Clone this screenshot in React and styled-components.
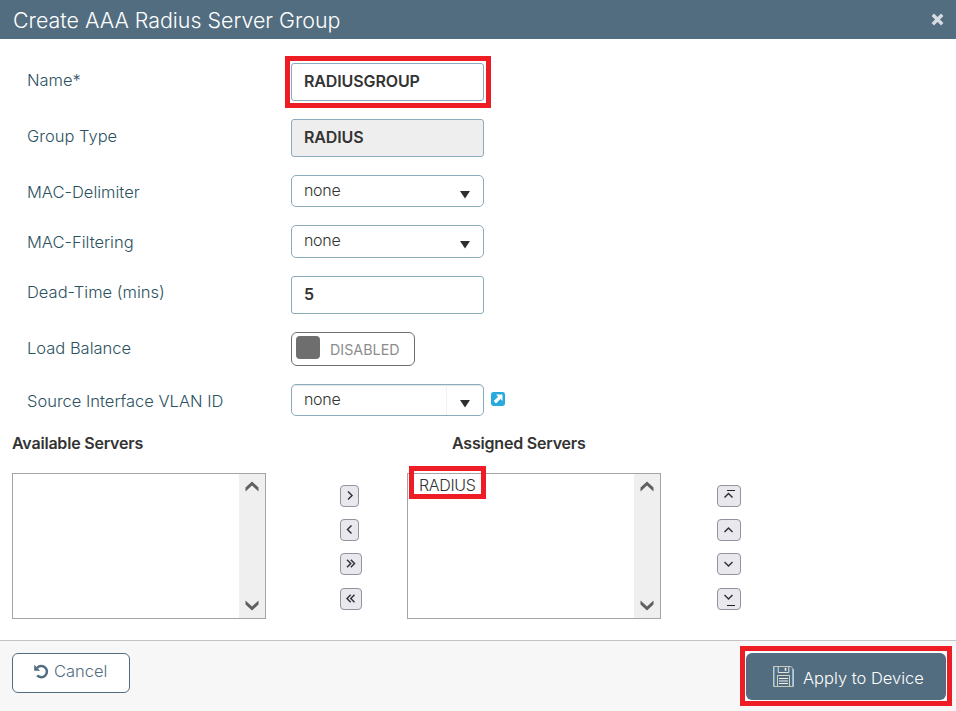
import { useState } from "react";
import styled, { createGlobalStyle, css } from "styled-components";

const GlobalStyle = createGlobalStyle`
  * {
    box-sizing: border-box;
  }
  body {
    margin: 0;
    background: #ffffff;
    font-family: Inter, "Liberation Sans", sans-serif;
    font-size: 16px;
    font-weight: 300;
    color: #333333;
  }
  button, input {
    font-family: inherit;
    margin: 0;
  }
`;

const Dialog = styled.div`
  display: flex;
  flex-direction: column;
  width: 956px;
  height: 711px;
  overflow: hidden;
`;

const Header = styled.div`
  display: flex;
  align-items: center;
  justify-content: space-between;
  height: 39px;
  padding: 0 12px 0 13px;
  background: #526d80;
  color: #ffffff;
`;

const Title = styled.div`
  font-size: 21.4px;
  line-height: 38px;
  white-space: nowrap;
`;

const CloseButton = styled.button`
  display: flex;
  padding: 0;
  border: none;
  background: transparent;
  cursor: pointer;
`;

const Form = styled.div`
  display: flex;
  flex-direction: column;
  gap: 18px;
  padding: 24px 28px 0 27px;
`;

const Row = styled.div`
  display: flex;
  align-items: flex-start;
`;

const Label = styled.label`
  flex: 0 0 264px;
  height: 30px;
  font-size: 16.5px;
  line-height: ${(p) => (p.$raised ? 32 : 34)}px;
  color: #2b5261;
  white-space: nowrap;
`;

/* red frame lying over the part it points to */
const highlight = css`
  position: relative;
  &::after {
    content: "";
    position: absolute;
    inset: ${(p) => p.$inset};
    border: 5px solid #ee1c25;
    pointer-events: none;
  }
`;

const Marked = styled.div`
  display: flex;
  ${highlight}
`;

const TextInput = styled.input`
  width: 193px;
  height: 38px;
  padding: 0 12px 2px;
  border: 1px solid #8aabbb;
  border-radius: 3px;
  background: #ffffff;
  color: #333333;
  font-size: 16px;
  font-weight: 600;
  letter-spacing: -0.12px;
  outline: none;
  &:disabled {
    background: #eeeeee;
    opacity: 1;
  }
`;

const SelectBox = styled.div`
  display: flex;
  justify-content: space-between;
  width: 193px;
  height: ${(p) => p.$height || 32}px;
  padding-left: 12px;
  border: 1px solid #8aabbb;
  border-radius: 5px;
  line-height: 29px;
  letter-spacing: -0.3px;
  ${(p) => p.$inner && "box-shadow: inset 0 1px 1px #e4e4e4;"}
`;

const SelectArrow = styled.span`
  display: flex;
  justify-content: center;
  width: 37px;
  padding-top: 15px;
  ${(p) => p.$divider && "border-left: 1px solid #f1f1f1;"}
`;

const Toggle = styled.button`
  display: flex;
  align-items: center;
  gap: 10px;
  width: 124px;
  height: 34px;
  padding: 0 4px 1px;
  border: 1px solid #6e6e6e;
  border-radius: 6px;
  background: #ffffff;
  color: #8c8c8c;
  font-size: 14.3px;
  font-weight: 400;
  cursor: pointer;
`;

const Knob = styled.span`
  width: 24px;
  height: 23px;
  margin-top: -2px;
  border-radius: 4px;
  background: #6e6e6e;
`;

const ToggleText = styled.span`
  padding-top: 1px;
`;

const VlanLink = styled.span`
  display: flex;
  padding: 8px 0 0 7px;
`;

const Headings = styled.div`
  display: grid;
  grid-template-columns: 440px 1fr;
  padding: 17px 12px 0;
  color: #333333;
  font-weight: 600;
  line-height: 20px;
  letter-spacing: -0.2px;
  white-space: nowrap;
`;

const Heading = styled.div``;

const Transfer = styled.div`
  display: flex;
  align-items: flex-start;
  padding: 20px 12px 21px;
`;

const ListBox = styled.div`
  display: flex;
  justify-content: space-between;
  width: 254px;
  height: 146px;
  border: 1px solid #a5a5a5;
`;

const Items = styled.div`
  padding: 1px 0 0 11px;
`;

const Item = styled.div`
  width: 57px;
  height: 21px;
  line-height: 21px;
  letter-spacing: -0.35px;
  ${highlight}
`;

const Scrollbar = styled.div`
  display: flex;
  flex-direction: column;
  justify-content: space-between;
  align-items: center;
  width: 26px;
  padding: 7px 0;
  background: #efefef;
`;

const ButtonColumn = styled.div`
  display: flex;
  flex-direction: column;
  gap: 12px;
  width: ${(p) => p.$width}px;
  margin: 12px 0 0 ${(p) => p.$left}px;
`;

const MoveButton = styled.button`
  display: flex;
  align-items: center;
  justify-content: center;
  width: ${(p) => p.$width}px;
  height: 22px;
  padding: 0 1px 1px 0;
  border: 1px solid #9292a0;
  border-radius: 4px;
  background: #e9e9ed;
  cursor: pointer;
  &:last-child {
    margin-top: 1px;
  }
`;

const Footer = styled.div`
  display: flex;
  flex: 1;
  align-items: flex-start;
  justify-content: space-between;
  padding: 12px 9px 0 12px;
  border-top: 1px solid #c4c4c4;
  background: #f7f7f7;
`;

const CancelButton = styled.button`
  display: flex;
  align-items: center;
  gap: 5px;
  width: 118px;
  height: 40px;
  padding: 0 0 4px 21px;
  border: 1px solid #526d80;
  border-radius: 6px;
  background: #ffffff;
  color: #526d80;
  font-size: 16.5px;
  font-weight: 300;
  cursor: pointer;
`;

const ApplyFrame = styled.div`
  width: 202px;
  height: 49px;
  margin-top: -1px;
  padding: 1px;
  background: #ffffff;
  ${highlight}
`;

const ApplyButton = styled.button`
  display: flex;
  align-items: center;
  gap: 9px;
  width: 200px;
  height: 47px;
  padding: 2px 0 0 27px;
  border: none;
  border-radius: 6px;
  background: #526d80;
  color: #ffffff;
  font-size: 16.5px;
  font-weight: 300;
  white-space: nowrap;
  cursor: pointer;
  svg {
    margin-top: -2px;
  }
`;

const CloseIcon = () => (
  <svg width="13" height="13" viewBox="0 0 13 13">
    <path d="M3 3l7 7M10 3l-7 7" stroke="#d6dce0" strokeWidth="3.4" strokeLinecap="square" />
  </svg>
);

const ArrowDown = () => (
  <svg width="10" height="8" viewBox="0 0 10 8">
    <path d="M0 0h10L5 7.4z" fill="#2e2e2e" />
  </svg>
);

const LinkIcon = () => (
  <svg width="14" height="14" viewBox="0 0 14 14">
    <rect width="14" height="14" rx="2.4" fill="#27a9dd" />
    <path d="M5 2.6h6.5V9L9.4 7 5 11.4 2.7 9.1 7.1 4.7z" fill="#ffffff" />
  </svg>
);

const ScrollArrow = ({ down }) => (
  <svg width="14" height="11" viewBox="0 0 14 11">
    <path
      d={down ? "M0.5 0.5L7 6.6l6.5-6.1v4L7 10.5 0.5 4.5z" : "M0.5 10.5L7 4.4l6.5 6.1v-4L7 0.5 0.5 6.5z"}
      fill="#606060"
    />
  </svg>
);

const glyphs = {
  right: "M5 2.5L9 6.5 5 10.5",
  left: "M8.5 2.5L4.5 6.5l4 4",
  allRight: "M3 2.8l3.7 3.7L3 10.2M6.8 2.8l3.7 3.7-3.7 3.7",
  allLeft: "M6.7 2.8L3 6.5l3.7 3.7M10.5 2.8L6.8 6.5l3.7 3.7",
  top: "M2.5 8.5l4-4 4 4",
  up: "M2.5 9l4-4 4 4",
  down: "M2.5 5l4 4 4-4",
  bottom: "M2.5 3l4 4 4-4",
};

const MoveIcon = ({ name }) => (
  <svg width="13" height="14" viewBox="0 0 13 14">
    <path d={glyphs[name]} fill="none" stroke="#333340" strokeWidth="1.5" />
    {name === "top" && <path d="M5 1.5h8" stroke="#222222" />}
    {name === "bottom" && <path d="M5 13.5h8" stroke="#222222" />}
  </svg>
);

const UndoIcon = () => (
  <svg width="15" height="15" viewBox="0 0 15 15">
    <path d="M3.2 3.8A5.6 5.6 0 1 1 3.2 11.4" fill="none" stroke="#526d80" strokeWidth="2.5" />
    <path d="M0.2 0.8v5.9h5.9z" fill="#526d80" />
  </svg>
);

const SaveIcon = () => (
  <svg width="21" height="21" viewBox="0 0 21 21" fill="none">
    <path d="M0.5 0.5h17.4l2.6 2.6v17.4H0.5z" stroke="#c5cbbb" />
    <path d="M1.5 1v19" stroke="#6fa5cc" />
    <path d="M19.5 3v17" stroke="#86bdf0" />
    <path d="M5.2 0.8v5.7h10.6V0.8" stroke="#dfe3e4" />
    <path d="M12.5 1.8v3" stroke="#f0f0f0" strokeWidth="1.6" />
    <path d="M4.5 20V9.5h12V20" stroke="#d8d3bd" />
    <path d="M6 12.5h9M6 15h9M6 17.5h9" stroke="#f0f0f0" />
  </svg>
);

const Select = ({ height, divider }) => (
  <SelectBox $height={height} $inner={divider}>
    none
    <SelectArrow $divider={divider}>
      <ArrowDown />
    </SelectArrow>
  </SelectBox>
);

const ServerList = ({ servers }) => (
  <ListBox>
    <Items>
      {servers.map((server) => (
        <Item key={server} $inset="-9px -10px -3px -10px">
          {server}
        </Item>
      ))}
    </Items>
    <Scrollbar>
      <ScrollArrow />
      <ScrollArrow down />
    </Scrollbar>
  </ListBox>
);

export default function App() {
  const [name, setName] = useState("RADIUSGROUP");
  const [deadTime, setDeadTime] = useState("5");

  return (
    <>
      <GlobalStyle />
      <Dialog>
        <Header>
          <Title>Create AAA Radius Server Group</Title>
          <CloseButton aria-label="Close">
            <CloseIcon />
          </CloseButton>
        </Header>
        <Form>
          <Row>
            <Label>Name*</Label>
            <Marked $inset="-7px -7px -7px -6px">
              <TextInput value={name} onChange={(e) => setName(e.target.value)} />
            </Marked>
          </Row>
          <Row>
            <Label>Group Type</Label>
            <TextInput value="RADIUS" disabled />
          </Row>
          <Row>
            <Label>MAC-Delimiter</Label>
            <Select />
          </Row>
          <Row>
            <Label>MAC-Filtering</Label>
            <Select height={33} />
          </Row>
          <Row>
            <Label $raised>Dead-Time (mins)</Label>
            <TextInput value={deadTime} onChange={(e) => setDeadTime(e.target.value)} />
          </Row>
          <Row>
            <Label $raised>Load Balance</Label>
            <Toggle>
              <Knob />
              <ToggleText>DISABLED</ToggleText>
            </Toggle>
          </Row>
          <Row>
            <Label>Source Interface VLAN ID</Label>
            <Select divider />
            <VlanLink>
              <LinkIcon />
            </VlanLink>
          </Row>
        </Form>
        <Headings>
          <Heading>Available Servers</Heading>
          <Heading>Assigned Servers</Heading>
        </Headings>
        <Transfer>
          <ServerList servers={[]} />
          <ButtonColumn $left={74} $width={67}>
            <MoveButton $width={19}><MoveIcon name="right" /></MoveButton>
            <MoveButton $width={19}><MoveIcon name="left" /></MoveButton>
            <MoveButton $width={22}><MoveIcon name="allRight" /></MoveButton>
            <MoveButton $width={22}><MoveIcon name="allLeft" /></MoveButton>
          </ButtonColumn>
          <ServerList servers={["RADIUS"]} />
          <ButtonColumn $left={56} $width={24}>
            <MoveButton $width={24}><MoveIcon name="top" /></MoveButton>
            <MoveButton $width={24}><MoveIcon name="up" /></MoveButton>
            <MoveButton $width={24}><MoveIcon name="down" /></MoveButton>
            <MoveButton $width={24}><MoveIcon name="bottom" /></MoveButton>
          </ButtonColumn>
        </Transfer>
        <Footer>
          <CancelButton>
            <UndoIcon />
            Cancel
          </CancelButton>
          <ApplyFrame $inset="-6px -5px -5px -5px">
            <ApplyButton>
              <SaveIcon />
              Apply to Device
            </ApplyButton>
          </ApplyFrame>
        </Footer>
      </Dialog>
    </>
  );
}
